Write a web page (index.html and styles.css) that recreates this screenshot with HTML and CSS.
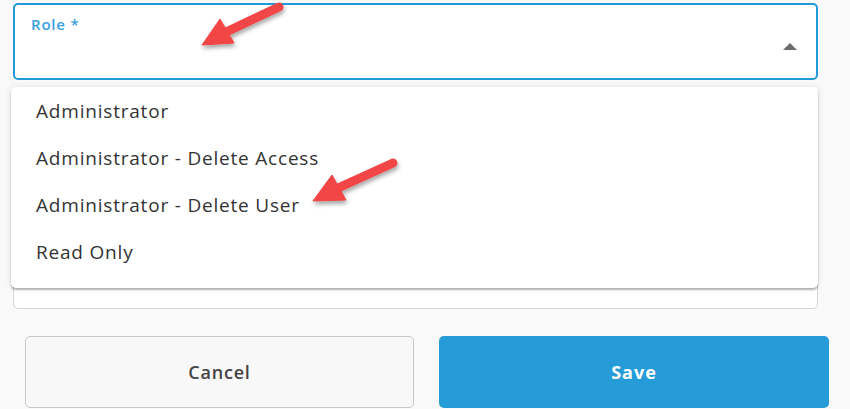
FILE: index.html
```html
<!DOCTYPE html>
<html>
<head>
<meta charset="utf-8">
<link rel="stylesheet" href="styles.css">
</head>
<body>
<div class="page">
  <div class="fields">
    <div class="field field-focused">
      <span class="field-label">Role *</span>
      <span class="caret"></span>
    </div>
    <div class="field field-plain"></div>
  </div>
  <div class="actions">
    <button class="btn btn-cancel">Cancel</button>
    <button class="btn btn-save">Save</button>
  </div>

  <ul class="menu">
    <li class="menu-item">Administrator</li>
    <li class="menu-item">Administrator - Delete Access</li>
    <li class="menu-item">Administrator - Delete User</li>
    <li class="menu-item">Read Only</li>
  </ul>

  <svg class="annotations" width="850" height="409" viewBox="0 0 850 409">
    <defs>
      <filter id="shadow" x="-20%" y="-20%" width="140%" height="160%">
        <feDropShadow dx="1" dy="3" stdDeviation="2" flood-color="#000" flood-opacity="0.35"/>
      </filter>
    </defs>
    <g filter="url(#shadow)" fill="#f24545" stroke="#f24545">
      <line x1="279" y1="7" x2="224" y2="33" stroke-width="9" stroke-linecap="round"/>
      <polygon points="202,45 220,19 234,43" stroke-width="1" stroke-linejoin="round"/>
      <line x1="393" y1="163" x2="338" y2="188" stroke-width="9" stroke-linecap="round"/>
      <polygon points="313,201 332,175 346,200" stroke-width="1" stroke-linejoin="round"/>
    </g>
  </svg>
</div>
</body>
</html>
```

FILE: styles.css
```css
html, body {
  margin: 0;
  padding: 0;
  background: #f9f9f9;
}

body {
  font-family: "Open Sans", "Noto Sans", Lato, sans-serif;
  color: #333;
  width: 850px;
  height: 409px;
  overflow: hidden;
}

.page {
  position: relative;
  width: 850px;
  height: 409px;
}

.fields {
  display: flex;
  flex-direction: column;
  padding: 3px 0 0 13px;
  width: 805px;
  gap: 154px;
}

.field {
  box-sizing: border-box;
  background: #fff;
  border-radius: 5px;
}

.field-focused {
  height: 77px;
  border: 2px solid #2299d8;
  display: flex;
  justify-content: space-between;
  padding: 9px 19px 0 16px;
}

.field-label {
  font-size: 15px;
  font-weight: 600;
  color: #3a9fdc;
  line-height: 20px;
  letter-spacing: 0.8px;
}

.caret {
  width: 0;
  height: 0;
  margin-top: 29px;
  border-left: 7px solid transparent;
  border-right: 7px solid transparent;
  border-bottom: 7px solid #6b6b6b;
}

.field-plain {
  height: 75px;
  border: 1px solid #d6d6d6;
}

.actions {
  display: flex;
  gap: 25px;
  padding: 27px 0 0 25px;
}

.btn {
  box-sizing: border-box;
  height: 72px;
  border-radius: 5px;
  font-family: inherit;
  font-size: 18px;
  font-weight: 600;
  letter-spacing: 0.8px;
  padding-bottom: 2px;
  cursor: pointer;
}

.btn-cancel {
  width: 389px;
  background: #f8f8f8;
  border: 1px solid #c9c9c9;
  color: #444;
}

.btn-save {
  width: 390px;
  background: #259bd8;
  border: none;
  color: #fff;
  font-weight: 700;
  letter-spacing: 1px;
}

.menu {
  position: absolute;
  left: 11px;
  top: 87px;
  width: 807px;
  height: 201px;
  box-sizing: border-box;
  margin: 0;
  padding: 1px 0 0 0;
  list-style: none;
  background: #fff;
  border-radius: 5px;
  box-shadow: 0 2px 2px rgba(0, 0, 0, 0.28), 0 0 6px rgba(0, 0, 0, 0.1);
}

.menu-item {
  height: 47px;
  line-height: 47px;
  padding-left: 25px;
  font-size: 19px;
  color: #333;
  letter-spacing: 0.8px;
}

.annotations {
  position: absolute;
  left: 0;
  top: 0;
  pointer-events: none;
}
```
